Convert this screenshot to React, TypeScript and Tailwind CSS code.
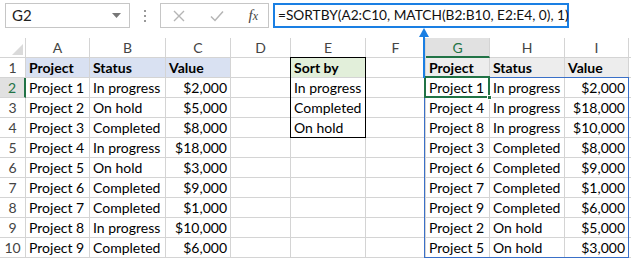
import React from 'react';

const FONT = { fontFamily: 'Lato, "Liberation Sans", sans-serif' };

const cols = ['A', 'B', 'C', 'D', 'E', 'F', 'G', 'H', 'I'];

type Cell = { v?: string; bold?: boolean; right?: boolean; bg?: string };

const left: [string, string, string][] = [
  ['Project 1', 'In progress', '$2,000'],
  ['Project 2', 'On hold', '$5,000'],
  ['Project 3', 'Completed', '$8,000'],
  ['Project 4', 'In progress', '$18,000'],
  ['Project 5', 'On hold', '$3,000'],
  ['Project 6', 'Completed', '$9,000'],
  ['Project 7', 'Completed', '$1,000'],
  ['Project 8', 'In progress', '$10,000'],
  ['Project 9', 'Completed', '$6,000'],
];

const sorted: [string, string, string][] = [
  ['Project 1', 'In progress', '$2,000'],
  ['Project 4', 'In progress', '$18,000'],
  ['Project 8', 'In progress', '$10,000'],
  ['Project 3', 'Completed', '$8,000'],
  ['Project 6', 'Completed', '$9,000'],
  ['Project 7', 'Completed', '$1,000'],
  ['Project 9', 'Completed', '$6,000'],
  ['Project 2', 'On hold', '$5,000'],
  ['Project 5', 'On hold', '$3,000'],
];

const sortBy = ['In progress', 'Completed', 'On hold'];

function buildRows(): Cell[][] {
  const rows: Cell[][] = [];
  rows.push([
    { v: 'Project', bold: true, bg: 'bg-[#d9e1f2]' },
    { v: 'Status', bold: true, bg: 'bg-[#d9e1f2]' },
    { v: 'Value', bold: true, bg: 'bg-[#d9e1f2]' },
    {},
    { v: 'Sort by', bold: true, bg: 'bg-[#e2efda]' },
    {},
    { v: 'Project', bold: true, bg: 'bg-[#ededed]' },
    { v: 'Status', bold: true, bg: 'bg-[#ededed]' },
    { v: 'Value', bold: true, bg: 'bg-[#ededed]' },
  ]);
  for (let i = 0; i < 9; i++) {
    const l = left[i];
    const s = sorted[i];
    rows.push([
      { v: l[0] },
      { v: l[1] },
      { v: l[2], right: true },
      {},
      { v: sortBy[i] },
      {},
      { v: s[0] },
      { v: s[1] },
      { v: s[2], right: true },
    ]);
  }
  return rows;
}

export default function App() {
  const rows = buildRows();

  return (
    <div className="relative w-[631px] h-[258px] bg-white overflow-hidden text-black" style={FONT}>
      {/* formula bar */}
      <div className="h-[38px] flex items-start pt-[3px] pl-[5px]">
        <div className="w-[125px] h-[25px] border border-[#c6c6c6] flex items-center justify-between pl-[6px] pr-[8px]">
          <span className="text-[15px] text-[#222]">G2</span>
          <svg width="9" height="5" viewBox="0 0 9 5"><path d="M0 0h9L4.5 5z" fill="#777" /></svg>
        </div>
        <div className="w-[30px] h-[25px] flex flex-col items-center justify-center gap-[3px]">
          <span className="w-[2px] h-[2px] bg-[#999]" />
          <span className="w-[2px] h-[2px] bg-[#999]" />
          <span className="w-[2px] h-[2px] bg-[#999]" />
        </div>
        <div className="w-[109px] h-[25px] border border-[#c6c6c6] flex items-center justify-between pl-[12px] pr-[10px]">
          <svg width="12" height="12" viewBox="0 0 12 12"><path d="M1 1l10 10M11 1L1 11" stroke="#b5b5b5" strokeWidth="1.4" /></svg>
          <svg width="14" height="12" viewBox="0 0 14 12"><path d="M1 6.5l4 4L13 1.5" stroke="#b5b5b5" strokeWidth="1.5" fill="none" /></svg>
          <span className="text-[15px] italic text-[#444]" style={{ fontFamily: '"Liberation Serif", serif' }}>f<span className="text-[12px]">x</span></span>
        </div>
        <div className="ml-[4px] w-[296px] h-[25px] border-2 border-[#1a7fe3] flex items-center pl-[3px] text-[13.7px] text-[#111] whitespace-nowrap">
          =SORTBY(A2:C10, MATCH(B2:B10, E2:E4, 0), 1)
        </div>
      </div>

      {/* sheet */}
      <div className="relative">
        <div className="grid grid-cols-[26px_64px_76px_65px_60px_75px_60px_64px_75px_64px_2px] grid-rows-[20px_repeat(10,20px)]">
          <div className="border-r border-b border-[#d4d4d4] flex items-end justify-end pr-[2px] pb-[2px]">
            <svg width="11" height="11" viewBox="0 0 11 11"><path d="M11 0v11H0z" fill="#dadada" /></svg>
          </div>
          {cols.map((c) =>
            c === 'G' ? (
              <div key={c} className="bg-[#e1e1e1] border-r border-[#d4d4d4] border-b-2 border-b-[#217346] flex items-center justify-center text-[14px] text-[#217346]">
                {c}
              </div>
            ) : (
              <div key={c} className="border-r border-b border-[#d4d4d4] flex items-center justify-center text-[14px] text-[#444]">
                {c}
              </div>
            )
          )}
          <div className="border-b border-[#d4d4d4]" />

          {rows.map((r, ri) => (
            <React.Fragment key={ri}>
              {ri === 1 ? (
                <div className="bg-[#e1e1e1] border-b border-[#d4d4d4] border-r-2 border-r-[#217346] flex items-center justify-center text-[14px] text-[#217346]">
                  {ri + 1}
                </div>
              ) : (
                <div className="border-r border-b border-[#d4d4d4] flex items-center justify-center text-[14px] text-[#444]">
                  {ri + 1}
                </div>
              )}
              {r.map((cell, ci) => (
                <div
                  key={ci}
                  className={`border-r border-b border-[#d4d4d4] flex items-center px-[3px] text-[14px] leading-[20px] whitespace-nowrap overflow-hidden ${cell.right ? 'justify-end' : 'justify-start'} ${cell.bold ? 'font-bold' : ''} ${cell.bg ?? ''}`}
                >
                  {cell.v}
                </div>
              ))}
              <div className="border-b border-[#d4d4d4]" />
            </React.Fragment>
          ))}
        </div>

        {/* Sort by outline */}
        <div className="absolute left-[290px] top-[19px] w-[76px] h-[81px] border border-black pointer-events-none" />
        {/* spill range */}
        <div className="absolute left-[424px] top-[39px] w-[205px] h-[181px] border border-[#3a70c8] pointer-events-none" />
        {/* active cell */}
        <div className="absolute left-[424px] top-[38px] w-[66px] h-[22px] border-2 border-[#217346] pointer-events-none" />
        <div className="absolute left-[487px] top-[57px] w-[5px] h-[5px] bg-[#217346] border border-white pointer-events-none" />
      </div>

      {/* arrow from formula bar */}
      <svg className="absolute left-[418px] top-[28px]" width="12" height="50" viewBox="0 0 12 50">
        <path d="M6 4V50" stroke="#1a7fe3" strokeWidth="2" />
        <path d="M6 0L11 9H1z" fill="#1a7fe3" />
      </svg>
    </div>
  );
}
